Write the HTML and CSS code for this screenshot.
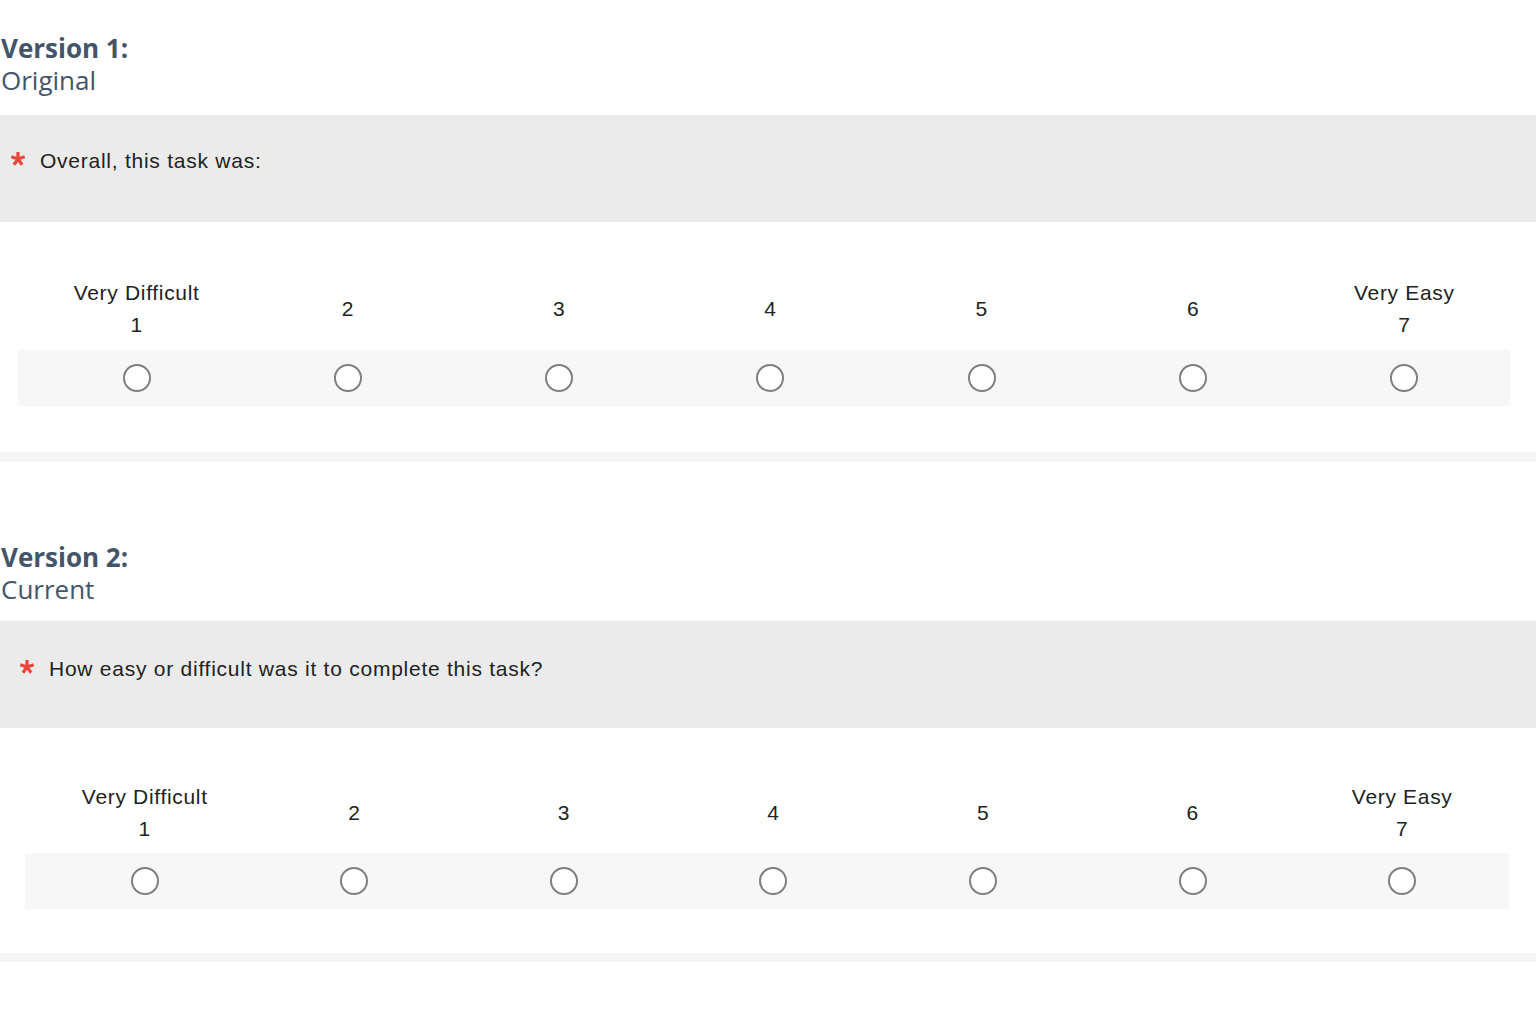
FILE: index.html
```html
<!DOCTYPE html>
<html>
<head>
  <link rel="stylesheet" href="styles.css">
</head>
<body>
  <div class="version v1">
    <div class="title">
      <div class="title-main">Version 1:</div>
      <div class="title-sub">Original</div>
    </div>
    <div class="question">
      <svg class="req" viewBox="0 0 16 16"><path d="M8 8V1M8 8L14.7 5.8M8 8L12.1 13.7M8 8L3.9 13.7M8 8L1.3 5.8"/></svg>
      <span class="question-text">Overall, this task was:</span>
    </div>
    <div class="scale">
      <div class="labels">
        <div class="label">Very Difficult<br>1</div>
        <div class="label">2</div>
        <div class="label">3</div>
        <div class="label">4</div>
        <div class="label">5</div>
        <div class="label">6</div>
        <div class="label">Very Easy<br>7</div>
      </div>
      <div class="choices">
        <div class="choice"><span class="radio"></span></div>
        <div class="choice"><span class="radio"></span></div>
        <div class="choice"><span class="radio"></span></div>
        <div class="choice"><span class="radio"></span></div>
        <div class="choice"><span class="radio"></span></div>
        <div class="choice"><span class="radio"></span></div>
        <div class="choice"><span class="radio"></span></div>
      </div>
    </div>
    <div class="divider"></div>
  </div>

  <div class="version v2">
    <div class="title">
      <div class="title-main">Version 2:</div>
      <div class="title-sub">Current</div>
    </div>
    <div class="question">
      <svg class="req" viewBox="0 0 16 16"><path d="M8 8V1M8 8L14.7 5.8M8 8L12.1 13.7M8 8L3.9 13.7M8 8L1.3 5.8"/></svg>
      <span class="question-text">How easy or difficult was it to complete this task?</span>
    </div>
    <div class="scale">
      <div class="labels">
        <div class="label">Very Difficult<br>1</div>
        <div class="label">2</div>
        <div class="label">3</div>
        <div class="label">4</div>
        <div class="label">5</div>
        <div class="label">6</div>
        <div class="label">Very Easy<br>7</div>
      </div>
      <div class="choices">
        <div class="choice"><span class="radio"></span></div>
        <div class="choice"><span class="radio"></span></div>
        <div class="choice"><span class="radio"></span></div>
        <div class="choice"><span class="radio"></span></div>
        <div class="choice"><span class="radio"></span></div>
        <div class="choice"><span class="radio"></span></div>
        <div class="choice"><span class="radio"></span></div>
      </div>
    </div>
    <div class="divider"></div>
  </div>
</body>
</html>
```

FILE: styles.css
```css
* {
  margin: 0;
  padding: 0;
  box-sizing: border-box;
}

body {
  background: #fff;
  font-family: "Liberation Sans", Arial, sans-serif;
  color: #222;
  overflow: hidden;
}

.v1 {
  padding-top: 32px;
}

.v2 {
  padding-top: 79px;
}

.title {
  font-family: "Open Sans", sans-serif;
  font-size: 26px;
  line-height: 32px;
  color: #44546a;
  padding-left: 1px;
}

.title-main {
  font-weight: 700;
}

.question {
  background: #ebebeb;
  height: 107px;
  margin-top: 19px;
  padding-top: 34px;
  padding-left: 9px;
  display: flex;
  align-items: flex-start;
  font-size: 21px;
  line-height: 24px;
  letter-spacing: 0.75px;
}

.v2 .question {
  margin-top: 16px;
  padding-top: 36px;
  padding-left: 18px;
  box-shadow: 0 -1px 2px rgba(0, 0, 0, 0.04);
}

.req {
  width: 16px;
  height: 16px;
  margin: 2px 14px 0 1px;
  flex-shrink: 0;
  fill: none;
  stroke: #e8483a;
  stroke-width: 3.2;
}

.scale {
  margin: 55px 26px 0 18px;
}

.v2 .scale {
  margin: 53px 27px 0 25px;
}

.labels,
.choices {
  display: grid;
  grid-template-columns: repeat(7, 1fr);
  padding-left: 13px;
}

.v2 .labels,
.v2 .choices {
  padding-left: 15px;
  padding-right: 2px;
}

.label {
  height: 64px;
  display: flex;
  align-items: center;
  justify-content: center;
  text-align: center;
  font-size: 21px;
  line-height: 32px;
  letter-spacing: 0.68px;
}

.choices {
  margin-top: 9px;
  height: 56px;
  background: #f7f7f7;
}

.v2 .choices {
  margin-top: 8px;
}

.choice {
  display: flex;
  align-items: center;
  justify-content: center;
}

.radio {
  width: 28px;
  height: 28px;
  border: 2px solid #7f7f7f;
  border-radius: 50%;
  background: #fff;
}

.divider {
  margin-top: 46px;
  height: 10px;
  background: #f5f5f5;
}

.v2 .divider {
  margin-top: 44px;
  height: 9px;
}
```
